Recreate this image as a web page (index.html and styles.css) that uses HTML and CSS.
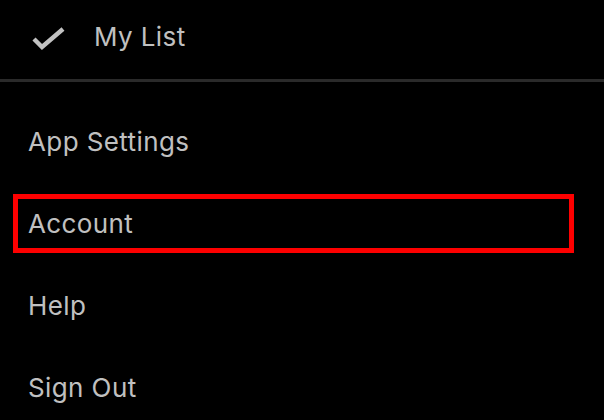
FILE: index.html
```html
<!DOCTYPE html>
<html>
<head>
<meta charset="utf-8">
<link rel="stylesheet" href="styles.css">
</head>
<body>
<div class="screen">
  <div class="top-row">
    <svg class="check" width="34" height="26" viewBox="0 0 34 26">
      <polyline points="2,13 10,21 31,3" fill="none" stroke="#c2c2c2" stroke-width="4.4"/>
    </svg>
    <span class="top-label">My List</span>
  </div>
  <div class="divider"></div>
  <div class="menu">
    <div class="item">App Settings</div>
    <div class="item selected">Account</div>
    <div class="item">Help</div>
    <div class="item">Sign Out</div>
  </div>
</div>
</body>
</html>
```
FILE: styles.css
```css
html, body {
  margin: 0;
  padding: 0;
  background: #000;
}
.screen {
  width: 604px;
  height: 420px;
  overflow: hidden;
  background: #000;
  font-family: Inter, "Noto Sans", sans-serif;
  color: #c0c0c0;
  letter-spacing: 0.4px;
}
.top-row {
  height: 73px;
  padding-bottom: 6px;
  padding-left: 32px;
  display: flex;
  align-items: center;
  gap: 28px;
}
.check {
  display: block;
  margin-top: 5px;
}
.top-label {
  font-size: 26px;
  line-height: 1;
}
.divider {
  height: 3px;
  background: #2a2a2a;
}
.menu {
  padding-top: 30px;
  display: flex;
  flex-direction: column;
  gap: 23px;
}
.item {
  box-sizing: border-box;
  height: 59px;
  margin: 0 30px 0 13px;
  border: 5px solid transparent;
  padding-left: 10px;
  display: flex;
  align-items: center;
  font-size: 26px;
  line-height: 1;
}
.item.selected {
  border-color: #fe0000;
}
```
